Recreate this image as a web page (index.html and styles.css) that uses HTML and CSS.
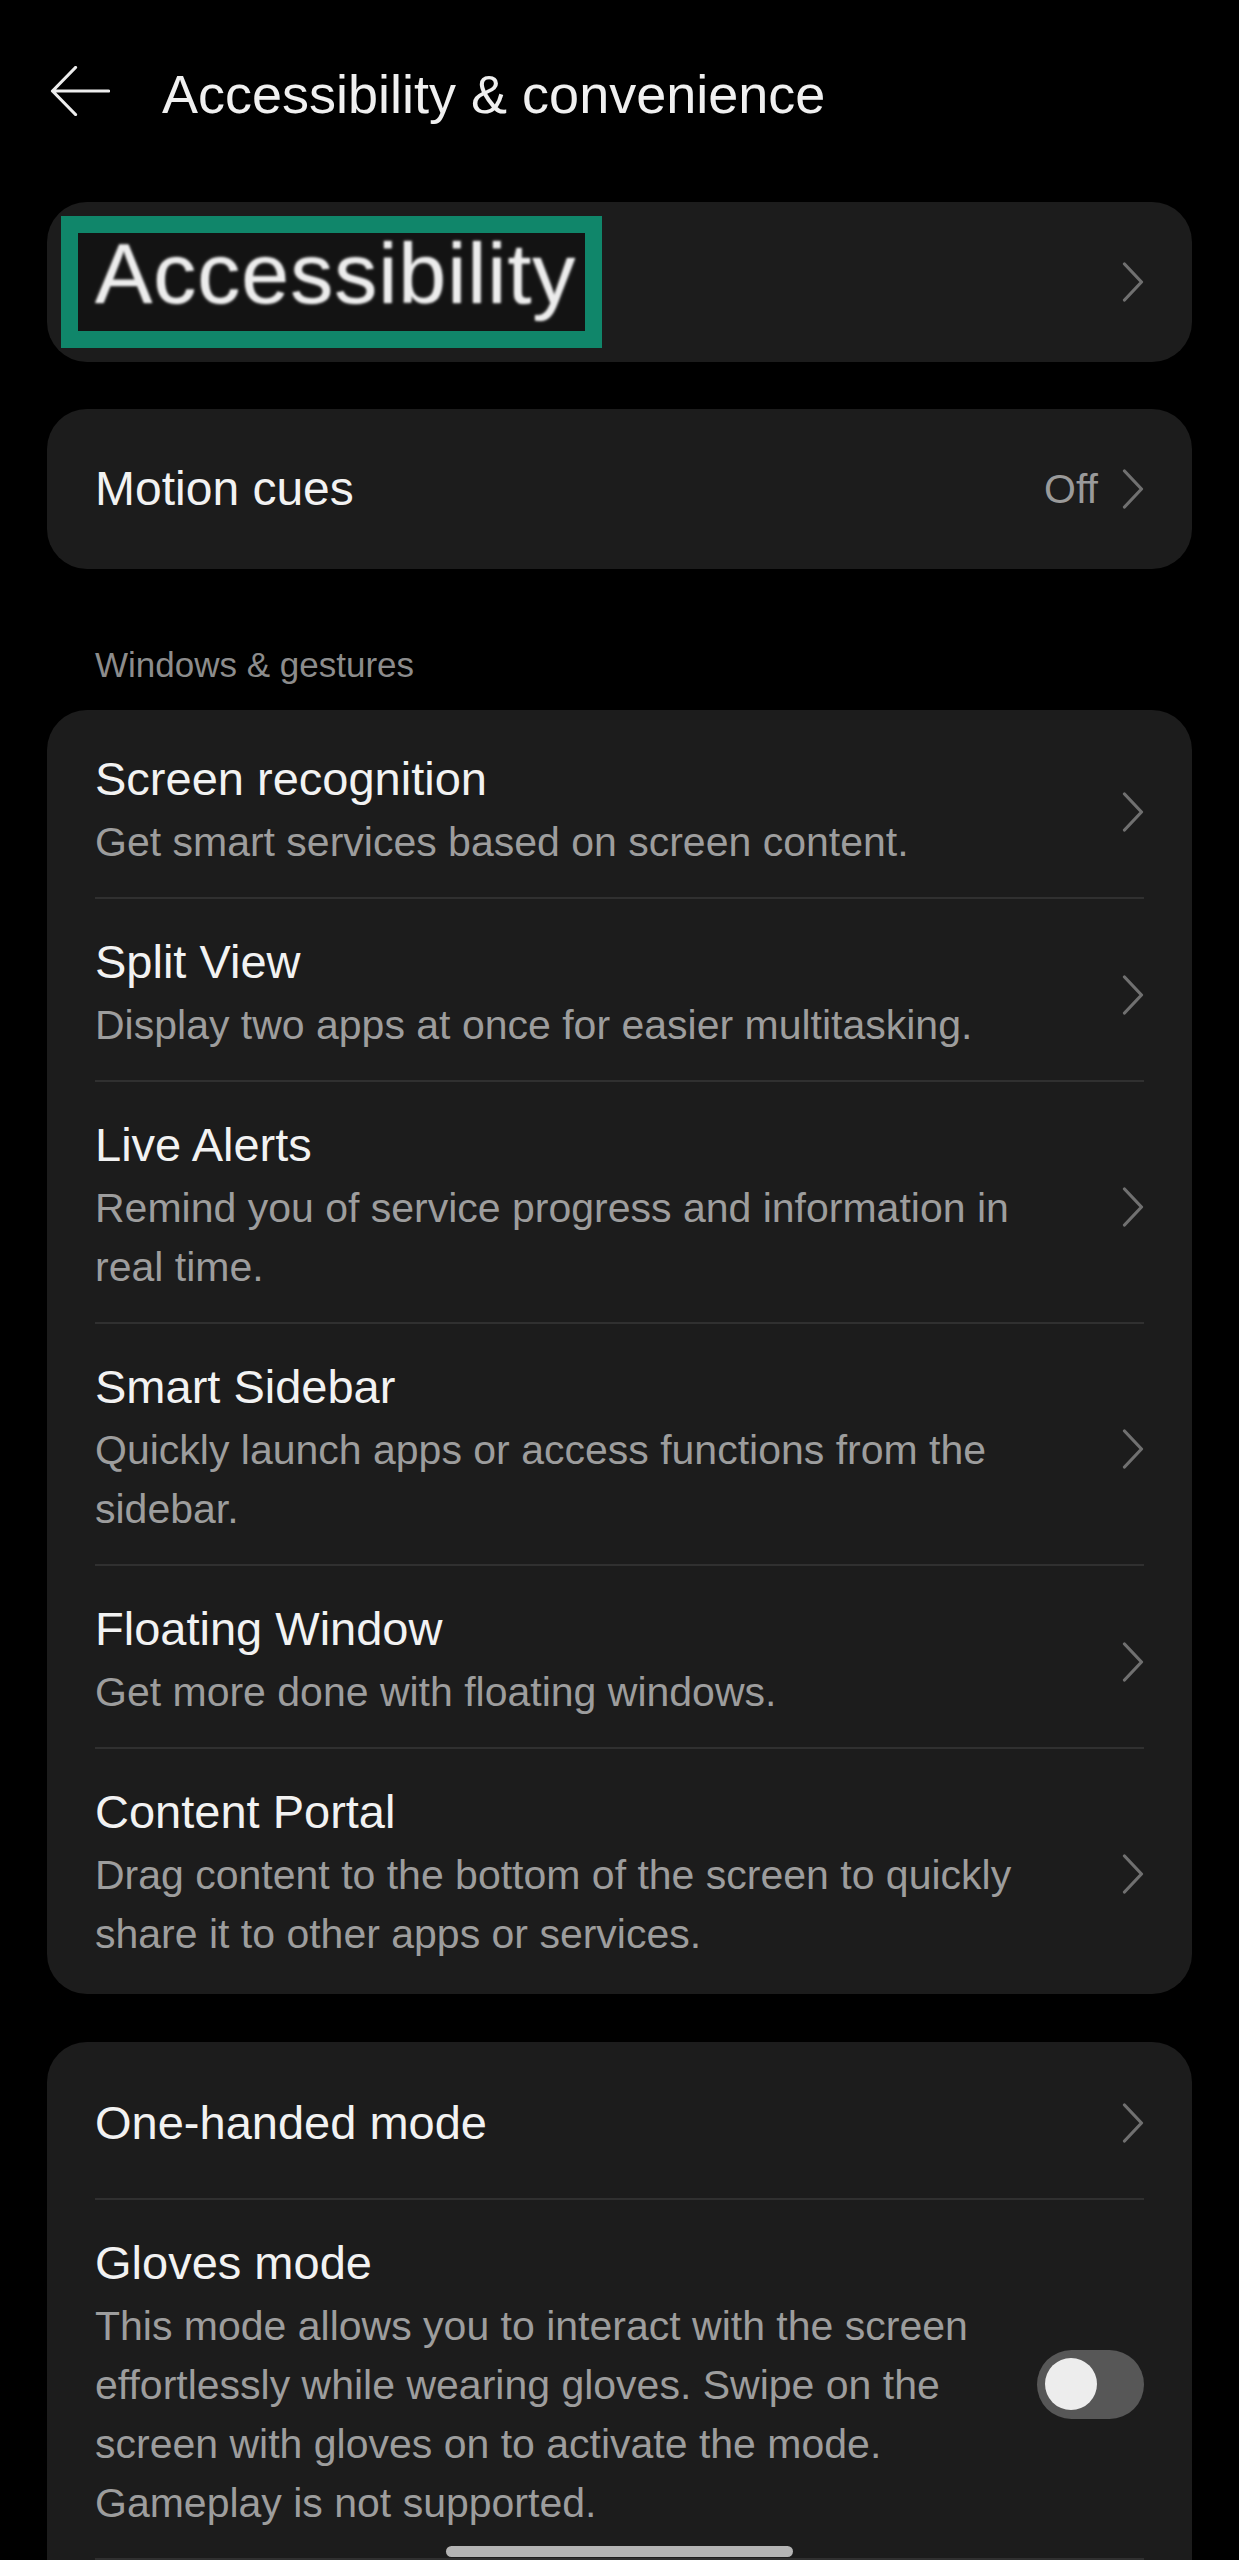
FILE: index.html
```html
<!DOCTYPE html>
<html lang="en">
<head>
  <meta charset="UTF-8" />
  <meta name="viewport" content="width=device-width, initial-scale=1.0" />
  <title>Accessibility &amp; convenience</title>
  <link rel="stylesheet" href="styles.css">
</head>
<body>

  <!-- Top bar -->
  <header class="topbar">
    <svg class="back" viewBox="0 0 60 50" aria-hidden="true">
      <path d="M58.5 25H2.5M25.5 1.5L2.5 25l23 23.5" />
    </svg>
    <h1 class="page-title">Accessibility &amp; convenience</h1>
  </header>

  <main class="content">

    <!-- Accessibility (highlighted) -->
    <section class="card card--single card--highlighted">
      <div class="highlight"><span class="highlight-text">Accessibility</span></div>
      <svg class="chevron chevron--end" viewBox="0 0 22 40"><path d="M2.5 2L19.5 20L2.5 38" /></svg>
    </section>

    <!-- Motion cues -->
    <section class="card card--single">
      <span class="item-title">Motion cues</span>
      <span class="item-value">Off</span>
      <svg class="chevron" viewBox="0 0 22 40"><path d="M2.5 2L19.5 20L2.5 38" /></svg>
    </section>

    <h2 class="group-label">Windows &amp; gestures</h2>

    <section class="card card--list">
      <div class="row">
        <div class="row-text">
          <div class="item-title">Screen recognition</div>
          <div class="item-desc">Get smart services based on screen content.</div>
        </div>
        <svg class="chevron" viewBox="0 0 22 40"><path d="M2.5 2L19.5 20L2.5 38" /></svg>
      </div>
      <div class="row">
        <div class="row-text">
          <div class="item-title">Split View</div>
          <div class="item-desc">Display two apps at once for easier multitasking.</div>
        </div>
        <svg class="chevron" viewBox="0 0 22 40"><path d="M2.5 2L19.5 20L2.5 38" /></svg>
      </div>
      <div class="row">
        <div class="row-text">
          <div class="item-title">Live Alerts</div>
          <div class="item-desc">Remind you of service progress and information in real time.</div>
        </div>
        <svg class="chevron" viewBox="0 0 22 40"><path d="M2.5 2L19.5 20L2.5 38" /></svg>
      </div>
      <div class="row">
        <div class="row-text">
          <div class="item-title">Smart Sidebar</div>
          <div class="item-desc">Quickly launch apps or access functions from the sidebar.</div>
        </div>
        <svg class="chevron" viewBox="0 0 22 40"><path d="M2.5 2L19.5 20L2.5 38" /></svg>
      </div>
      <div class="row">
        <div class="row-text">
          <div class="item-title">Floating Window</div>
          <div class="item-desc">Get more done with floating windows.</div>
        </div>
        <svg class="chevron" viewBox="0 0 22 40"><path d="M2.5 2L19.5 20L2.5 38" /></svg>
      </div>
      <div class="row">
        <div class="row-text">
          <div class="item-title">Content Portal</div>
          <div class="item-desc">Drag content to the bottom of the screen to quickly share it to other apps or services.</div>
        </div>
        <svg class="chevron" viewBox="0 0 22 40"><path d="M2.5 2L19.5 20L2.5 38" /></svg>
      </div>
    </section>

    <section class="card card--list card--last">
      <div class="row row--single">
        <div class="row-text">
          <div class="item-title">One-handed mode</div>
        </div>
        <svg class="chevron" viewBox="0 0 22 40"><path d="M2.5 2L19.5 20L2.5 38" /></svg>
      </div>
      <div class="row row--closed">
        <div class="row-text">
          <div class="item-title">Gloves mode</div>
          <div class="item-desc">This mode allows you to interact with the screen effortlessly while wearing gloves. Swipe on the screen with gloves on to activate the mode. Gameplay is not supported.</div>
        </div>
        <div class="toggle"><div class="toggle-knob"></div></div>
      </div>
    </section>

  </main>

  <div class="gesture-bar"></div>

</body>
</html>
```

FILE: styles.css
```css
body {
  margin: 0;
  height: 2560px;
  overflow: hidden;
  position: relative;
  background: #000;
  color: #f2f2f2;
  font-family: "Liberation Sans", Arial, sans-serif;
}

/* Top bar */
.topbar {
  display: flex;
  align-items: center;
  padding: 62px 0 0 50px;
}

.back {
  width: 60px;
  height: 50px;
  margin-top: -7px;
  fill: none;
  stroke: #ededed;
  stroke-width: 3.2;
  stroke-linecap: round;
  stroke-linejoin: round;
}

.page-title {
  margin: 0 0 0 52px;
  font-size: 54px;
  line-height: 64px;
  font-weight: normal;
  color: #f0f0f0;
}

/* Cards */
.content {
  padding: 0 47px;
}

.card {
  background: #1c1c1c;
  border-radius: 40px;
}

.card--single {
  display: flex;
  align-items: center;
  height: 160px;
  padding: 0 48px;
  margin-top: 47px;
}

.card--highlighted {
  margin-top: 76px;
  padding-left: 14px;
}

.highlight {
  height: 98px;
  padding: 0 9px 0 17px;
  border: 17px solid #10866a;
  background: #131313;
}

.highlight-text {
  display: block;
  font-size: 86px;
  line-height: 80px;
  letter-spacing: 1px;
  color: #ececec;
  text-shadow: 0 0 3px rgba(255, 255, 255, 0.5);
  filter: blur(0.8px);
}

.card--single .item-title {
  flex: 1;
  font-size: 48px;
}

.item-value {
  margin-right: 24px;
  font-size: 41px;
  color: #9a9a9a;
}

.chevron {
  flex: none;
  width: 22px;
  height: 40px;
  fill: none;
  stroke: #707070;
  stroke-width: 3.2;
  stroke-linecap: round;
  stroke-linejoin: round;
}

.chevron--end {
  margin-left: auto;
}

.group-label {
  margin: 75px 0 24px 48px;
  font-size: 35px;
  line-height: 42px;
  font-weight: normal;
  color: #8c8c8c;
}

/* Lists */
.card--list {
  padding: 5px 0;
}

.card--last {
  margin-top: 48px;
  padding-bottom: 120px;
}

.row {
  display: flex;
  align-items: center;
  margin: 0 48px;
  padding: 36px 0 25px;
}

.row + .row {
  border-top: 2px solid #303030;
  padding-top: 35px;
}

.row--single {
  min-height: 151px;
  padding: 0;
}

.row--closed {
  border-bottom: 2px solid #303030;
}

.row-text {
  flex: 1;
  min-width: 0;
}

.item-title {
  font-size: 47px;
  line-height: 56px;
  color: #f2f2f2;
}

.item-desc {
  margin-top: 6px;
  font-size: 41px;
  line-height: 59px;
  color: #9d9d9d;
}

.row .chevron {
  margin-left: 60px;
}

/* Switch */
.toggle {
  flex: none;
  display: flex;
  align-items: center;
  box-sizing: border-box;
  width: 107px;
  height: 69px;
  margin-left: 40px;
  padding-left: 8px;
  border-radius: 35px;
  background: #575757;
}

.toggle-knob {
  width: 52px;
  height: 52px;
  border-radius: 50%;
  background: #ededed;
}

.gesture-bar {
  position: absolute;
  left: 446px;
  top: 2546px;
  width: 347px;
  height: 11px;
  border-radius: 6px;
  background: #b4b4b4;
}
```
